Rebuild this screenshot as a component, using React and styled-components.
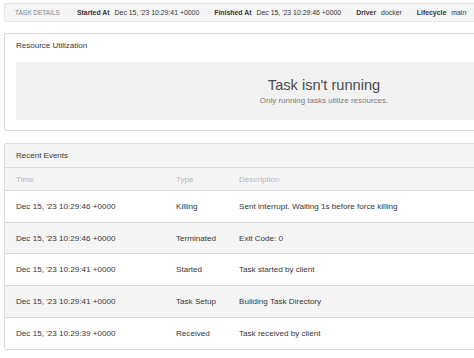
import React from 'react';
import styled, {createGlobalStyle} from 'styled-components';

const Global = createGlobalStyle`
body{
  margin: 0;
  overflow: hidden;
  background: #fff;
  font-family: "Liberation Sans", Arial, sans-serif;
  color: #363636;
}
`

const Page = styled.div`
width: 640px;
padding: 3px 0 0 4px;
`

const DetailBar = styled.div`
display: flex;
align-items: center;
height: 17px;
padding-left: 10px;
background: #f5f5f5;
border: 1px solid #e6e6e6;
border-radius: 2px;
font-size: 6.9px;
white-space: nowrap;
`

const BarLabel = styled.span`
text-transform: uppercase;
font-size: 6.5px;
color: #7b8a9c;
margin-right: 17px;
`

const Pair = styled.span`
margin-right: 15px;
b{
  font-weight: bold;
  margin-right: 5px;
  color: #363636;
}
`

const Card = styled.div`
border: 1px solid #dbdbdb;
border-radius: 2px;
margin-top: ${p => p.gap}px;
background: #fff;
`

const CardHead = styled.div`
font-size: 8px;
padding: 0 11px;
height: 24px;
box-sizing: border-box;
background: ${p => p.shade ? '#f5f5f5' : 'transparent'};
border-bottom: ${p => p.shade ? '1px solid #dbdbdb' : 'none'};
display: flex;
align-items: ${p => p.shade ? 'center' : 'flex-start'};
padding-top: ${p => p.shade ? 0 : 7}px;
`

const Empty = styled.div`
margin: 4px 11px 10px;
height: 58px;
background: #f2f2f2;
display: flex;
flex-direction: column;
align-items: center;
justify-content: center;
h2{
  margin: 0;
  font-size: 14.6px;
  font-weight: normal;
  color: #4a4a4a;
}
p{
  margin: 3px 0 0;
  font-size: 8px;
  color: #7a7a7a;
}
`

const Row = styled.div`
display: grid;
grid-template-columns: 160px 63px 1fr;
align-items: center;
height: ${p => p.head ? 23 : 31.7}px;
padding-left: 11px;
font-size: 8.1px;
color: ${p => p.head ? '#b5b5b5' : '#363636'};
background: ${p => p.shade ? '#f5f5f5' : '#fff'};
border-bottom: ${p => p.last ? 'none' : '1px solid #dbdbdb'};
box-sizing: border-box;
white-space: nowrap;
`

const events = [
  ["Dec 15, '23 10:29:46 +0000", 'Killing', 'Sent interrupt. Waiting 1s before force killing'],
  ["Dec 15, '23 10:29:46 +0000", 'Terminated', 'Exit Code: 0'],
  ["Dec 15, '23 10:29:41 +0000", 'Started', 'Task started by client'],
  ["Dec 15, '23 10:29:41 +0000", 'Task Setup', 'Building Task Directory'],
  ["Dec 15, '23 10:29:39 +0000", 'Received', 'Task received by client'],
]

export default function App(){
  return(
    <>
    <Global/>
    <Page>
      <DetailBar>
        <BarLabel>Task Details</BarLabel>
        <Pair><b>Started At</b>Dec 15, '23 10:29:41 +0000</Pair>
        <Pair><b>Finished At</b>Dec 15, '23 10:29:46 +0000</Pair>
        <Pair><b>Driver</b>docker</Pair>
        <Pair><b>Lifecycle</b>main</Pair>
      </DetailBar>

      <Card gap={11}>
        <CardHead>Resource Utilization</CardHead>
        <Empty>
          <h2>Task isn't running</h2>
          <p>Only running tasks utilize resources.</p>
        </Empty>
      </Card>

      <Card gap={12}>
        <CardHead shade>Recent Events</CardHead>
        <Row head shade><span>Time</span><span>Type</span><span>Description</span></Row>
        {events.map((e, i) => (
          <Row key={i} shade={i % 2 === 1} last={i === events.length - 1}>
            <span>{e[0]}</span><span>{e[1]}</span><span>{e[2]}</span>
          </Row>
        ))}
      </Card>
    </Page>
    </>
  )
}
